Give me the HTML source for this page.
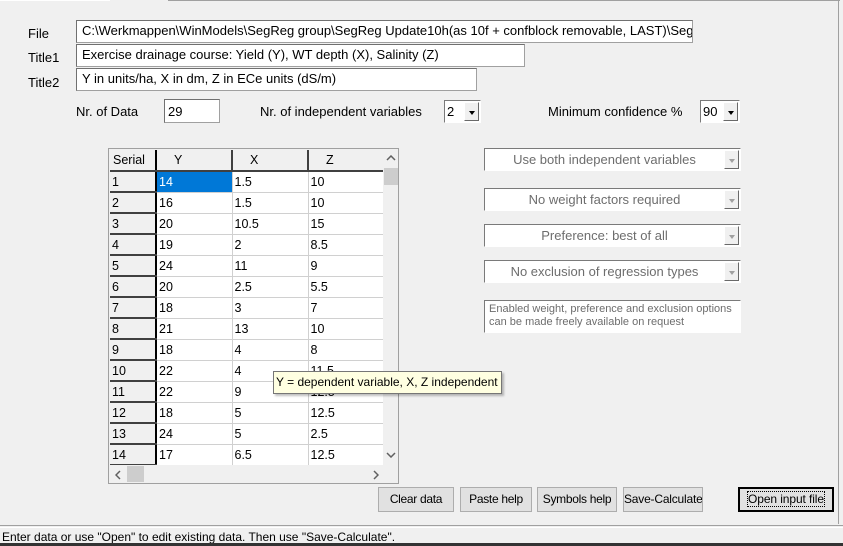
<!DOCTYPE html>
<html><head><style>
*{margin:0;padding:0;box-sizing:border-box}
body{width:843px;height:546px;background:#f0f0f0;font-family:"Liberation Sans",sans-serif;font-size:13px;color:#000;position:relative;overflow:hidden}
.a{position:absolute;white-space:nowrap}
.in{position:absolute;background:#fff;border:1px solid #a0a0a0;border-top-color:#707070;border-left-color:#707070;padding:2px 0 0 5px;overflow:hidden;white-space:nowrap}
.cb{position:absolute;background:#fff;border:1px solid #7a7a7a;border-right-color:#fff;border-bottom-color:#fff;font-size:13px}
.cb .ar{position:absolute;right:1px;top:1px;bottom:1px;width:15px;background:#f0f0f0;border:1px solid #fff;border-right-color:#696969;border-bottom-color:#696969}
.cb .ar:after{content:"";position:absolute;left:4px;top:8px;border-left:3px solid transparent;border-right:3px solid transparent;border-top:4px solid #000}
.dis{color:#6d6d6d;text-align:center;padding-top:3px;padding-right:16px}
.dis .ar:after{border-top-color:#a0a0a0}
table{border-collapse:collapse;font-size:12.5px}
td{height:21px;border-right:1px solid #d0d0d0;border-bottom:1px solid #d0d0d0;padding:0 0 0 2px;background:#fff}
td.s{background:#f0f0f0;border-right:2px solid #000;border-bottom:2px solid #404040;width:46px}
.btn{position:absolute;top:487px;height:25px;border:1px solid #adadad;background:#e1e1e1;font-size:12px;text-align:center;line-height:22px;white-space:nowrap;letter-spacing:-0.3px;overflow:hidden}
</style></head><body>
<div class="a" style="left:0;top:0;width:110px;height:1px;background:#fff"></div>
<div class="a" style="left:168px;top:0;width:672px;height:1px;background:#a0a0a0"></div>
<div class="a" style="left:838px;top:0;width:1px;height:524px;background:#a0a0a0"></div>
<div class="a" style="left:28px;top:26px">File</div>
<div class="a" style="left:28px;top:50px">Title1</div>
<div class="a" style="left:28px;top:75px">Title2</div>
<div class="in" style="left:76px;top:20px;width:617px;height:23px">C:\Werkmappen\WinModels\SegReg group\SegReg Update10h(as 10f + confblock removable, LAST)\SegReg</div>
<div class="in" style="left:76px;top:44px;width:449px;height:23px">Exercise drainage course: Yield (Y), WT depth (X), Salinity (Z)</div>
<div class="in" style="left:76px;top:68px;width:401px;height:23px">Y in units/ha, X in dm, Z in ECe units (dS/m)</div>
<div class="a" style="left:76px;top:104px">Nr. of Data</div>
<div class="in" style="left:164px;top:99px;width:56px;height:24px;padding-top:4px;padding-left:3px">29</div>
<div class="a" style="left:260px;top:104px">Nr. of independent variables</div>
<div class="cb" style="left:444px;top:100px;width:37px;height:23px;padding:3px 0 0 2px">2<div class="ar"></div></div>
<div class="a" style="left:548px;top:104px">Minimum confidence %</div>
<div class="cb" style="left:700px;top:100px;width:40px;height:23px;padding:3px 0 0 2px">90<div class="ar"></div></div>

<div class="cb dis" style="left:484px;top:148px;width:257px;height:23px">Use both independent variables<div class="ar"></div></div>
<div class="cb dis" style="left:484px;top:188px;width:257px;height:23px">No weight factors required<div class="ar"></div></div>
<div class="cb dis" style="left:484px;top:224px;width:257px;height:23px">Preference: best of all<div class="ar"></div></div>
<div class="cb dis" style="left:484px;top:260px;width:257px;height:23px">No exclusion of regression types<div class="ar"></div></div>
<div class="cb" style="left:484px;top:300px;width:257px;height:33px;color:#6d6d6d;font-size:11px;line-height:13px;padding:2px 0 0 4px">Enabled weight, preference and exclusion options<br>can be made freely available on request</div>

<div class="a" style="left:108px;top:148px;width:291px;height:336px;border:1px solid #a0a0a0;background:#f0f0f0;overflow:hidden">
<table style="position:absolute;left:1px;top:1px">
<tr><td class="s" style="padding-left:3px">Serial</td><td style="width:76px;background:#f0f0f0;border-right:2px solid #404040;border-bottom:2px solid #404040;padding-left:17px">Y</td><td style="width:76px;background:#f0f0f0;border-right:2px solid #404040;border-bottom:2px solid #404040;padding-left:17px">X</td><td style="width:75px;background:#f0f0f0;border-bottom:2px solid #404040;padding-left:17px">Z</td></tr>
<tr><td class="s">1</td><td style="background:#0078d7;color:#fff">14</td><td>1.5</td><td>10</td></tr>
<tr><td class="s">2</td><td>16</td><td>1.5</td><td>10</td></tr>
<tr><td class="s">3</td><td>20</td><td>10.5</td><td>15</td></tr>
<tr><td class="s">4</td><td>19</td><td>2</td><td>8.5</td></tr>
<tr><td class="s">5</td><td>24</td><td>11</td><td>9</td></tr>
<tr><td class="s">6</td><td>20</td><td>2.5</td><td>5.5</td></tr>
<tr><td class="s">7</td><td>18</td><td>3</td><td>7</td></tr>
<tr><td class="s">8</td><td>21</td><td>13</td><td>10</td></tr>
<tr><td class="s">9</td><td>18</td><td>4</td><td>8</td></tr>
<tr><td class="s">10</td><td>22</td><td>4</td><td>11.5</td></tr>
<tr><td class="s">11</td><td>22</td><td>9</td><td>12.5</td></tr>
<tr><td class="s">12</td><td>18</td><td>5</td><td>12.5</td></tr>
<tr><td class="s">13</td><td>24</td><td>5</td><td>2.5</td></tr>
<tr><td class="s">14</td><td>17</td><td>6.5</td><td>12.5</td></tr>
</table>
<div class="a" style="left:274px;top:0;width:16px;height:316px;background:#f0f0f0"></div>
<svg class="a" style="left:277px;top:6px" width="10" height="6"><path d="M1 5L5 1L9 5" fill="none" stroke="#606060" stroke-width="1.5"/></svg>
<div class="a" style="left:275px;top:19px;width:14px;height:17px;background:#cdcdcd"></div>
<svg class="a" style="left:277px;top:303px" width="10" height="6"><path d="M1 1L5 5L9 1" fill="none" stroke="#606060" stroke-width="1.5"/></svg>
<div class="a" style="left:0;top:316px;width:290px;height:18px;background:#f0f0f0"></div>
<svg class="a" style="left:6px;top:321px" width="6" height="10"><path d="M5 1L1 5L5 9" fill="none" stroke="#606060" stroke-width="1.5"/></svg>
<div class="a" style="left:18px;top:317px;width:17px;height:16px;background:#cdcdcd"></div>
<svg class="a" style="left:264px;top:321px" width="6" height="10"><path d="M1 1L5 5L1 9" fill="none" stroke="#606060" stroke-width="1.5"/></svg>
</div>

<div class="a" style="left:273px;top:371px;height:23px;background:#ffffe1;border:1px solid #767676;box-shadow:2px 2px 2px rgba(0,0,0,.25);padding:3px 3px 0 2px;font-size:12px">Y = dependent variable, X, Z independent</div>

<div class="btn" style="left:378px;width:76px">Clear data</div>
<div class="btn" style="left:460px;width:72px">Paste help</div>
<div class="btn" style="left:537px;width:80px">Symbols help</div>
<div class="btn" style="left:623px;width:80px;font-size:12px;letter-spacing:-0.2px">Save-Calculate</div>
<div class="btn" style="left:738px;width:96px;border:2px solid #000;font-size:12px;letter-spacing:-0.1px;line-height:20px"><span style="outline:1px dotted #000">Open input file</span></div>

<div class="a" style="left:0;top:525px;width:843px;height:1px;background:#a0a0a0"></div>
<div class="a" style="left:0;top:527px;width:843px;height:1px;background:#fff"></div>
<div class="a" style="left:2px;top:530px;font-size:12px">Enter data or use "Open" to edit existing data. Then use "Save-Calculate".</div>
<div class="a" style="left:0;top:543px;width:843px;height:3px;background:#333"></div>
</body></html>
